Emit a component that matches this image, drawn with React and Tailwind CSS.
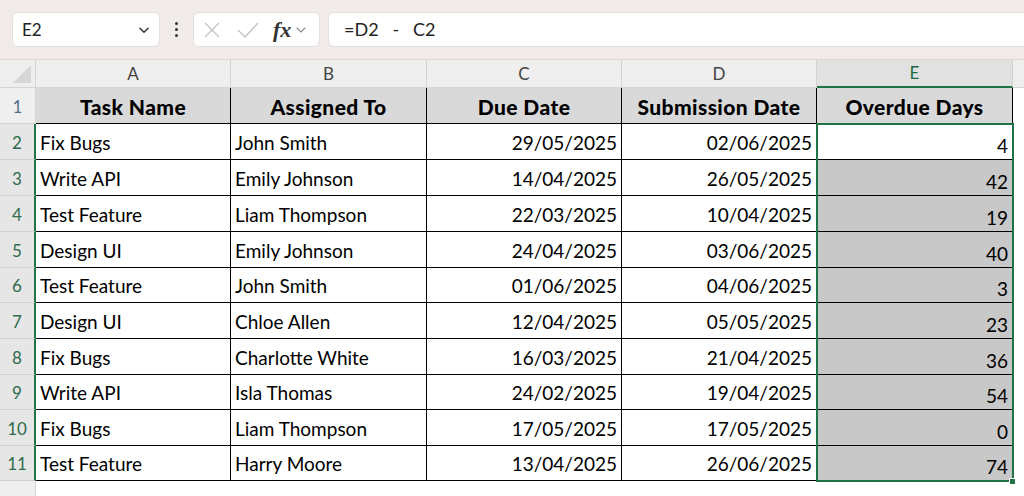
import React from "react";

const rows = [
  ["Fix Bugs", "John Smith", "29/05/2025", "02/06/2025", "4"],
  ["Write API", "Emily Johnson", "14/04/2025", "26/05/2025", "42"],
  ["Test Feature", "Liam Thompson", "22/03/2025", "10/04/2025", "19"],
  ["Design UI", "Emily Johnson", "24/04/2025", "03/06/2025", "40"],
  ["Test Feature", "John Smith", "01/06/2025", "04/06/2025", "3"],
  ["Design UI", "Chloe Allen", "12/04/2025", "05/05/2025", "23"],
  ["Fix Bugs", "Charlotte White", "16/03/2025", "21/04/2025", "36"],
  ["Write API", "Isla Thomas", "24/02/2025", "19/04/2025", "54"],
  ["Fix Bugs", "Liam Thompson", "17/05/2025", "17/05/2025", "0"],
  ["Test Feature", "Harry Moore", "13/04/2025", "26/06/2025", "74"],
];
const heights = [36, 36, 36, 36, 35, 36, 36, 35, 36, 35];

const font = { fontFamily: "Lato, 'Open Sans', sans-serif" };

export default function App() {
  return (
    <div className="w-[1024px] h-[496px] overflow-hidden bg-white text-black" style={font}>
      {/* formula bar */}
      <div className="h-[60px] bg-[#f1ecea] flex items-start pt-[12px] pl-[12px] gap-0 border-b border-[#d9d6d4]">
        <div className="w-[148px] h-[35px] bg-white rounded-md border border-[#e2dfdd] flex items-center justify-between pl-[9px] pr-[8px]">
          <span className="text-[17px] text-[#222]">E2</span>
          <svg width="14" height="14" viewBox="0 0 24 24" fill="none" stroke="#333" strokeWidth="2.4" strokeLinecap="round" strokeLinejoin="round"><path d="M5 9l7 7 7-7" /></svg>
        </div>
        <div className="w-[33px] h-[35px] flex flex-col items-center justify-center gap-[3px]">
          <span className="w-[3px] h-[3px] bg-[#333] rounded-full"></span>
          <span className="w-[3px] h-[3px] bg-[#333] rounded-full"></span>
          <span className="w-[3px] h-[3px] bg-[#333] rounded-full"></span>
        </div>
        <div className="w-[127px] h-[35px] bg-white rounded-md border border-[#e2dfdd] flex items-center pl-[8px]">
          <svg width="20" height="20" viewBox="0 0 20 20" fill="none" stroke="#c4c4c4" strokeWidth="1.4"><path d="M3 3l14 14M17 3L3 17" /></svg>
          <svg className="ml-[14px]" width="24" height="20" viewBox="0 0 24 20" fill="none" stroke="#c4c4c4" strokeWidth="1.4"><path d="M2 10l7 7L22 3" /></svg>
          <span className="ml-[13px] text-[22px] italic font-semibold text-[#333] leading-none" style={{ fontFamily: "'Liberation Serif', serif" }}>fx</span>
          <svg className="ml-[4px]" width="12" height="12" viewBox="0 0 24 24" fill="none" stroke="#888" strokeWidth="2.2" strokeLinecap="round"><path d="M4 8l8 8 8-8" /></svg>
        </div>
        <div className="ml-[8px] flex-1 h-[35px] bg-white rounded-l-md border border-r-0 border-[#e2dfdd] flex items-center pl-[15px]">
          <span className="text-[18px] text-[#222] whitespace-pre">=D2   -   C2</span>
        </div>
      </div>

      {/* grid */}
      <div className="relative">
        <div className="grid grid-cols-[36px_195px_196px_195px_195px_196px_1fr]">
          {/* column headers */}
          <div className="h-[28px] bg-[#efefef] border-r border-b border-[#d4d4d4] relative">
            <svg className="absolute right-[4px] bottom-[4px]" width="18" height="18" viewBox="0 0 18 18"><path d="M18 0L18 18L0 18Z" fill="#d6d6d6" /></svg>
          </div>
          {["A", "B", "C", "D"].map((c) => (
            <div key={c} className="h-[28px] bg-[#efefef] border-r border-b border-[#d4d4d4] flex items-center justify-center text-[17px] text-[#444]">{c}</div>
          ))}
          <div className="h-[28px] bg-[#e1e1e1] border-r border-[#cfcfcf] border-b-2 border-b-[#217346] flex items-center justify-center text-[17px] text-[#1e6b41]">E</div>
          <div className="h-[28px] bg-[#efefef] border-b border-[#d4d4d4]"></div>

          {/* row 1 */}
          <div className="h-[36px] bg-[#efefef] border-r border-b border-[#d4d4d4] flex items-end justify-center pb-[2px] leading-[28px] text-[17px] text-[#4f6f8f]">1</div>
          {["Task Name", "Assigned To", "Due Date", "Submission Date", "Overdue Days"].map((h) => (
            <div key={h} className="h-[36px] bg-[#d9d9d9] border-r border-b border-black flex items-end justify-center pb-[2px] leading-[28px] text-[21px] font-black tracking-[0.4px] whitespace-nowrap">{h}</div>
          ))}
          <div className="h-[36px] bg-white"></div>

          {rows.map((r, i) => {
            const h = heights[i];
            return (
              <React.Fragment key={i}>
                <div className="bg-[#e6e6e6] border-b border-[#d0d0d0] border-r-2 border-r-[#217346] flex items-end justify-center pb-[2px] leading-[28px] text-[17px] text-[#2f6b4c]" style={{ height: h }}>{i + 2}</div>
                <div className="border-r border-b border-black flex items-end pb-[2px] leading-[28px] pl-[4px] text-[19px] whitespace-nowrap" style={{ height: h }}>{r[0]}</div>
                <div className="border-r border-b border-black flex items-end pb-[2px] leading-[28px] pl-[4px] text-[19px] whitespace-nowrap" style={{ height: h }}>{r[1]}</div>
                <div className="border-r border-b border-black flex items-end justify-end pb-[2px] leading-[28px] pr-[4px] text-[19px]" style={{ height: h }}>{r[2]}</div>
                <div className="border-r border-b border-black flex items-end justify-end pb-[2px] leading-[28px] pr-[4px] text-[19px]" style={{ height: h }}>{r[3]}</div>
                <div className={`border-r border-b border-black flex items-end justify-end pr-[4px] leading-[26px] text-[19px] ${i === 0 ? "bg-white" : "bg-[#c8c8c8]"}`} style={{ height: h }}>{r[4]}</div>
                <div className="bg-white" style={{ height: h }}></div>
              </React.Fragment>
            );
          })}

          {/* empty row */}
          <div className="h-[20px] bg-[#efefef] border-r border-[#d4d4d4]"></div>
          <div className="h-[20px] col-span-6 bg-white"></div>
        </div>

        {/* selection */}
        <div className="absolute left-[816px] top-[63px] w-[198px] h-[359px] border-2 border-[#217346] pointer-events-none"></div>
        <div className="absolute left-[1009px] top-[418px] w-[7px] h-[7px] bg-[#217346] border border-white"></div>
      </div>
    </div>
  );
}
